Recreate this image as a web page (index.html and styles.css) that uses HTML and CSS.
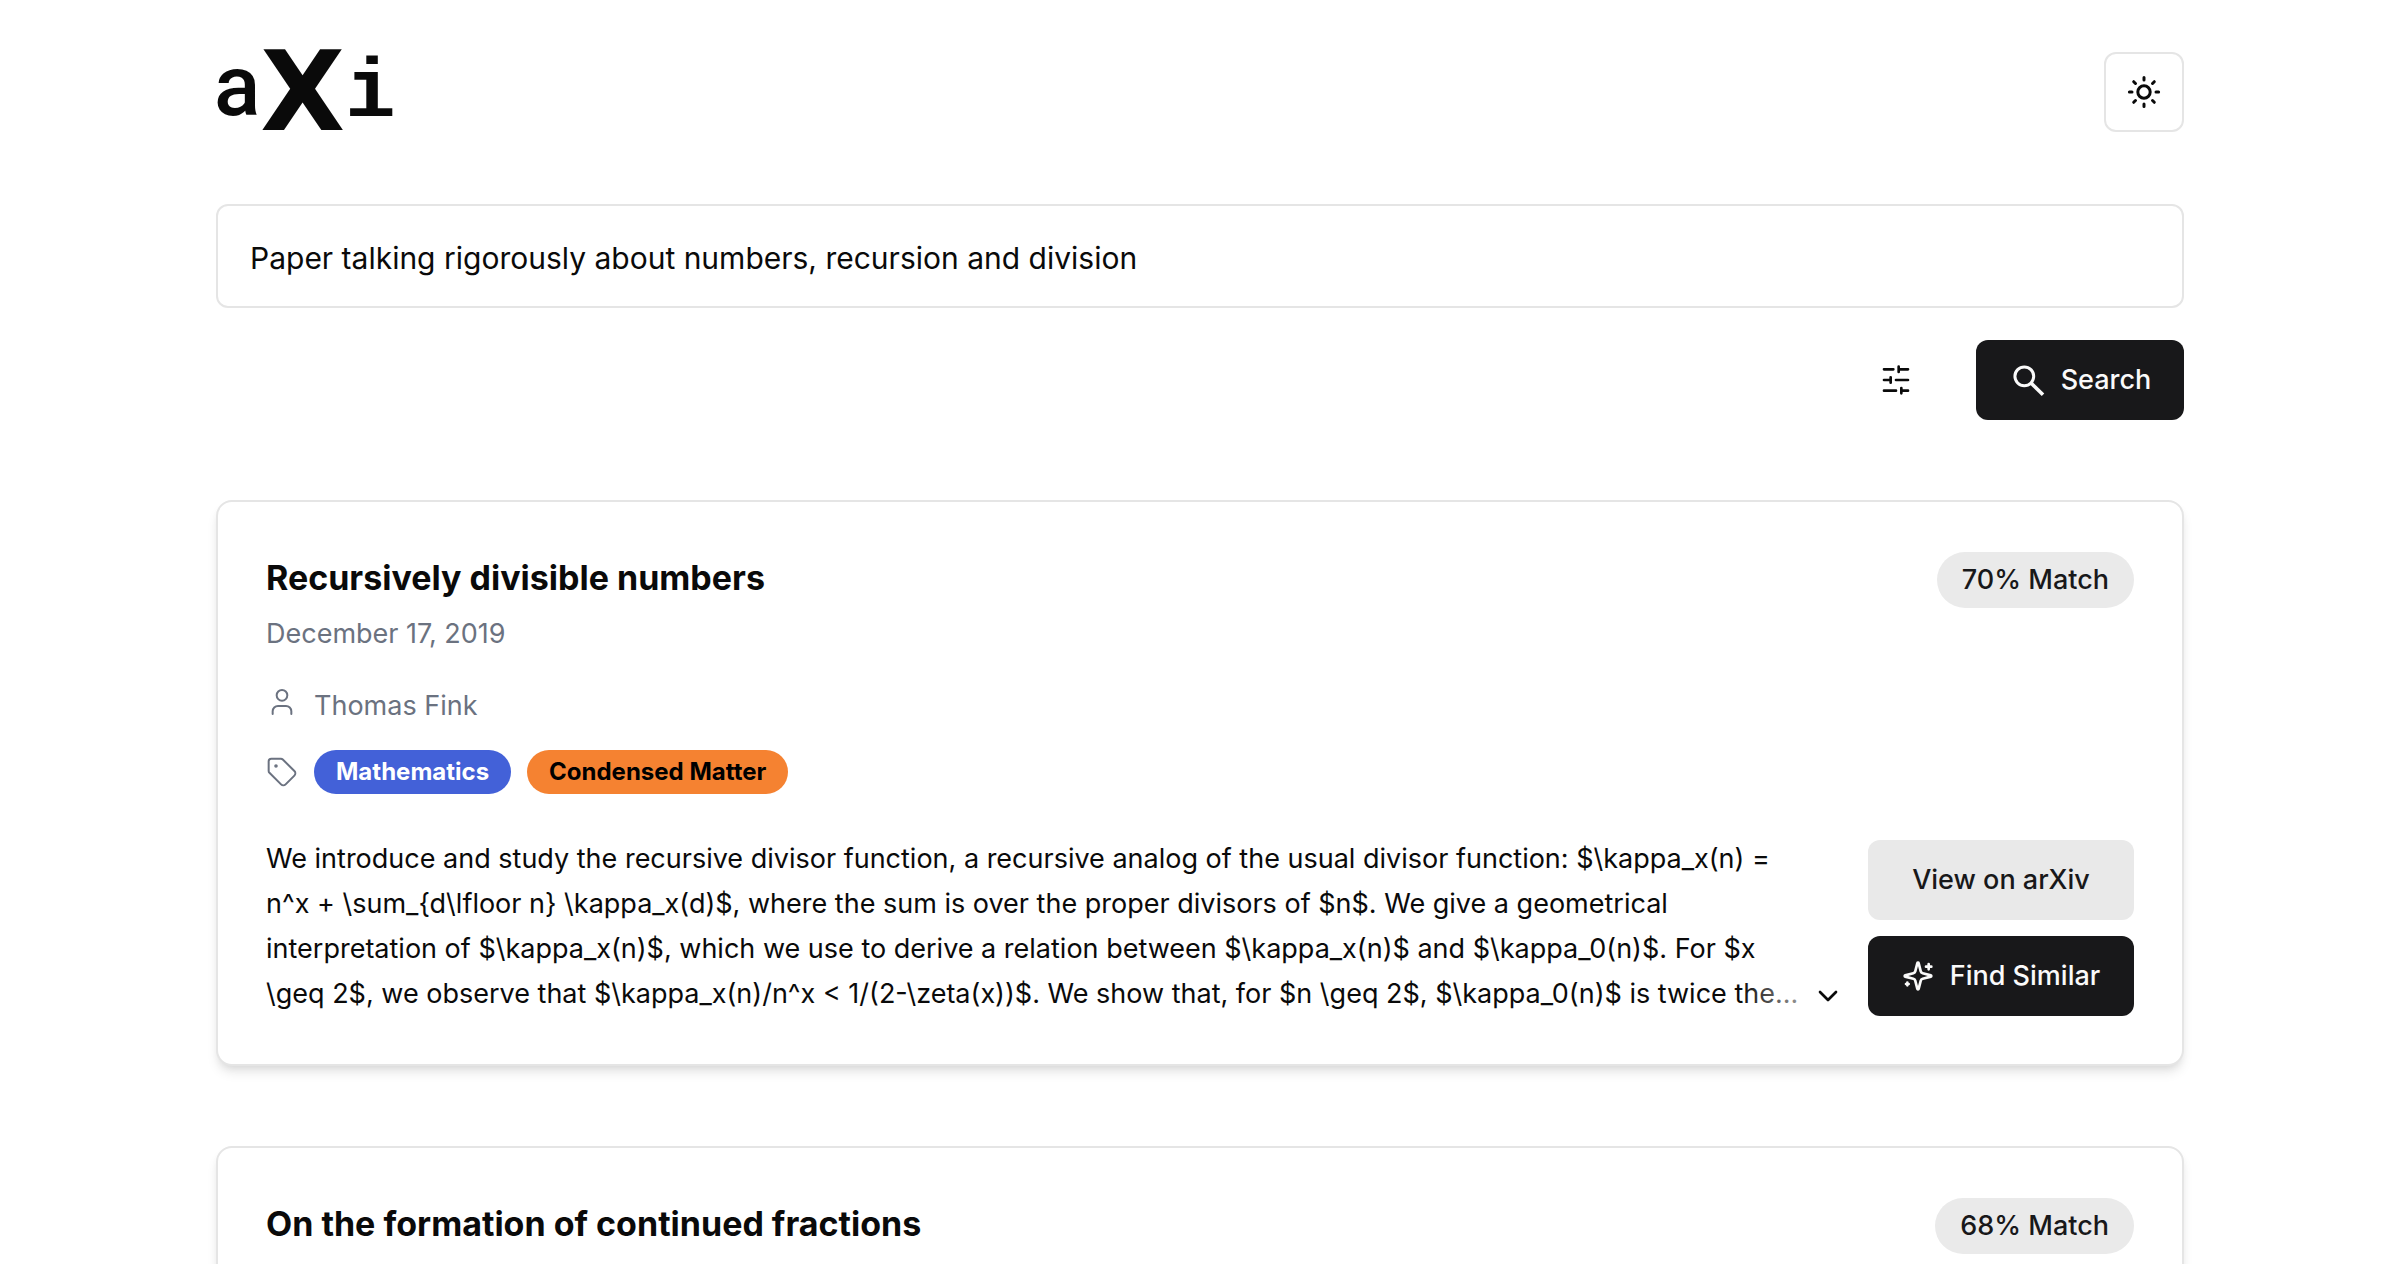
FILE: index.html
```html
<!DOCTYPE html>
<html lang="en">
<head>
<meta charset="utf-8">
<title>aXi</title>
<link rel="stylesheet" href="styles.css">
</head>
<body>
<div class="page">
  <header class="header">
    <a class="logo" href="#" aria-label="aXi"><span class="logo-a">a</span><span class="logo-x">X</span><span class="logo-i">i</span></a>
    <button class="theme-toggle" type="button" aria-label="Toggle theme">
      <svg class="icon-lg" viewBox="0 0 36 36" fill="none" stroke="currentColor" stroke-width="3" stroke-linecap="round">
        <circle cx="18" cy="18" r="6.2"/>
        <path d="M18 3.4v2.6M18 30v2.6M3.4 18h2.6M30 18h2.6M7.7 7.7l1.8 1.8M26.5 26.5l1.8 1.8M7.7 28.3l1.8-1.8M26.5 9.5l1.8-1.8"/>
      </svg>
    </button>
  </header>

  <main>
    <form class="search">
      <textarea class="query" rows="1" aria-label="Search papers">Paper talking rigorously about numbers, recursion and division</textarea>
      <div class="search-actions">
        <button class="btn btn-ghost" type="button" aria-label="Filters">
          <svg class="icon" viewBox="0 0 24 24" fill="none" stroke="currentColor" stroke-width="2" stroke-linecap="round">
            <path d="M21 4h-7M10 4H3M21 12h-9M8 12H3M21 20h-5M12 20H3M14 2v4M8 10v4M16 18v4"/>
          </svg>
        </button>
        <button class="btn btn-primary btn-search" type="button">
          <svg class="icon-lg" viewBox="0 0 36 36" fill="none" stroke="currentColor" stroke-width="3">
            <circle cx="15.3" cy="14.3" r="9.4"/>
            <path d="M22 21l12 11.8" stroke-width="3.6"/>
          </svg>
          Search
        </button>
      </div>
    </form>

    <section class="results">
      <article class="card">
        <div class="card-head">
          <h2 class="title">Recursively divisible numbers</h2>
          <span class="match">70% Match</span>
        </div>
        <p class="date">December 17, 2019</p>
        <div class="authors">
          <svg class="icon" viewBox="0 0 24 24" fill="none" stroke="currentColor" stroke-width="1.5" stroke-linecap="round" stroke-linejoin="round">
            <path d="M19 21v-2a4 4 0 0 0-4-4H9a4 4 0 0 0-4 4v2"/><circle cx="12" cy="7" r="4"/>
          </svg>
          <span>Thomas Fink</span>
        </div>
        <div class="tags">
          <svg class="icon" viewBox="0 0 24 24" fill="none" stroke="currentColor" stroke-width="1.5" stroke-linecap="round" stroke-linejoin="round">
            <path d="M12.586 2.586A2 2 0 0 0 11.172 2H4a2 2 0 0 0-2 2v7.172a2 2 0 0 0 .586 1.414l8.704 8.704a2.426 2.426 0 0 0 3.42 0l6.58-6.58a2.426 2.426 0 0 0 0-3.42z"/><circle cx="7.5" cy="7.5" r=".6" fill="currentColor"/>
          </svg>
          <span class="tag tag-math">Mathematics</span>
          <span class="tag tag-matter">Condensed Matter</span>
        </div>
        <div class="card-body">
          <div class="abstract">
            <p class="abstract-text">We introduce and study the recursive divisor function, a recursive analog of the usual divisor function: $\kappa_x(n) =<br>n^x + \sum_{d\lfloor n} \kappa_x(d)$, where the sum is over the proper divisors of $n$. We give a geometrical<br>interpretation of $\kappa_x(n)$, which we use to derive a relation between $\kappa_x(n)$ and $\kappa_0(n)$. For $x<br>\geq 2$, we observe that $\kappa_x(n)/n^x &lt; 1/(2-\zeta(x))$. We show that, for $n \geq 2$, $\kappa_0(n)$ is twice the...</p>
            <button class="expand" type="button" aria-label="Show more">
              <svg class="icon" viewBox="0 0 24 24" fill="none" stroke="currentColor" stroke-width="2" stroke-linecap="round" stroke-linejoin="round"><path d="m6 9 6 6 6-6"/></svg>
            </button>
          </div>
          <div class="card-actions">
            <a class="btn btn-secondary" href="#">View on arXiv</a>
            <button class="btn btn-primary" type="button">
              <svg class="icon" viewBox="0 0 24 24" fill="none" stroke="currentColor" stroke-width="2" stroke-linecap="round" stroke-linejoin="round">
                <path d="M9.937 15.5A2 2 0 0 0 8.5 14.063l-6.135-1.582a.5.5 0 0 1 0-.962L8.5 9.936A2 2 0 0 0 9.937 8.5l1.582-6.135a.5.5 0 0 1 .963 0L14.063 8.5A2 2 0 0 0 15.5 9.937l6.135 1.581a.5.5 0 0 1 0 .964L15.5 14.063a2 2 0 0 0-1.437 1.437l-1.582 6.135a.5.5 0 0 1-.963 0zM20 3v4M22 5h-4M4 17v2M5 18H3"/>
              </svg>
              Find Similar
            </button>
          </div>
        </div>
      </article>

      <article class="card">
        <div class="card-head">
          <h2 class="title">On the formation of continued fractions</h2>
          <span class="match">68% Match</span>
        </div>
      </article>
    </section>
  </main>
</div>
</body>
</html>
```
FILE: styles.css
```css
* {
  box-sizing: border-box;
}

body {
  margin: 0;
  background: #fff;
  color: #0a0a0a;
  font-family: Inter, "Liberation Sans", sans-serif;
  font-size: 27px;
  line-height: 40px;
}

h2,
p {
  margin: 0;
}

button,
textarea {
  font: inherit;
  color: inherit;
}

button {
  cursor: pointer;
}

.page {
  width: 82%;
  margin: 0 auto;
  padding: 52px 0 48px;
}

.icon,
.icon-lg {
  display: block;
  flex: none;
  width: 32px;
  height: 32px;
}

.icon-lg {
  width: 36px;
  height: 36px;
}

/* Header */
.header {
  display: flex;
  align-items: center;
  justify-content: space-between;
  height: 80px;
  margin-bottom: 72px;
}

.logo {
  display: flex;
  align-items: center;
  color: inherit;
  text-decoration: none;
  line-height: 80px;
}

.logo-a {
  font-family: Roboto, sans-serif;
  font-size: 86px;
  font-weight: 500;
  margin: -12px 0 0 -2px;
}

.logo-x {
  font-family: "DejaVu Sans", sans-serif;
  font-size: 110px;
  font-weight: 700;
}

.logo-i {
  font-family: "Liberation Mono", monospace;
  font-size: 84px;
  font-weight: 700;
  padding-top: 4px;
}

.theme-toggle {
  display: flex;
  align-items: center;
  justify-content: center;
  width: 80px;
  height: 80px;
  padding: 0;
  border: 2px solid #e5e5e5;
  border-radius: 12px;
  background: #fff;
}

/* Search form */
.query {
  display: block;
  width: 100%;
  height: 104px;
  padding: 28px 32px;
  border: 2px solid #e5e5e5;
  border-radius: 12px;
  background: #fff;
  font-size: 30px;
  line-height: 48px;
  resize: none;
  overflow: hidden;
  outline: none;
}

.search-actions {
  display: flex;
  justify-content: flex-end;
  gap: 40px;
  margin-top: 32px;
}

.btn {
  display: flex;
  align-items: center;
  justify-content: center;
  gap: 16px;
  height: 80px;
  padding: 0 32px;
  border: 0;
  border-radius: 12px;
  font-weight: 500;
  text-decoration: none;
}

.btn-primary {
  background: #18181a;
  color: #fafafa;
}

.btn-search {
  min-width: 208px;
}

.btn-secondary {
  background: #e9e9e9;
  color: #18181a;
}

.btn-ghost {
  width: 80px;
  padding: 0;
  background: transparent;
}

/* Result cards */
.results {
  display: flex;
  flex-direction: column;
  gap: 80px;
  margin-top: 80px;
}

.card {
  padding: 48px;
  border: 2px solid #e5e5e5;
  border-radius: 16px;
  background: #fff;
  box-shadow: 0 8px 12px -2px rgb(0 0 0 / 10%), 0 4px 8px -4px rgb(0 0 0 / 10%);
}

.card-head {
  display: flex;
  align-items: flex-start;
  justify-content: space-between;
  height: 56px;
}

.title {
  font-size: 34px;
  font-weight: 700;
  line-height: 56px;
}

.match {
  margin-top: 2px;
  padding: 8px 25px;
  border-radius: 28px;
  background: #eaeaea;
  color: #18181a;
  font-weight: 500;
}

.date {
  margin-top: 8px;
  color: #6b7280;
}

.authors,
.tags {
  display: flex;
  gap: 16px;
  color: #6b7280;
}

.authors {
  margin-top: 32px;
}

.tags {
  align-items: center;
  margin-top: 24px;
}

.tag {
  padding: 0 22px;
  border-radius: 22px;
  font-size: 24px;
  font-weight: 700;
  line-height: 44px;
}

.tag-math {
  background: #4361d8;
  color: #fff;
}

.tag-matter {
  background: #f58231;
  color: #000;
}

.card-body {
  display: flex;
  align-items: flex-end;
  gap: 24px;
  margin-top: 42px;
}

.abstract {
  position: relative;
  flex: 1;
}

.abstract-text {
  line-height: 45px;
  white-space: nowrap;
}

.expand {
  position: absolute;
  right: 0;
  bottom: 0;
  display: flex;
  align-items: center;
  justify-content: flex-end;
  width: 104px;
  height: 40px;
  padding: 0;
  border: 0;
  background: linear-gradient(to right, rgb(255 255 255 / 0%), #fff);
}

.card-actions {
  display: flex;
  flex-direction: column;
  gap: 16px;
  min-width: 266px;
}
```
